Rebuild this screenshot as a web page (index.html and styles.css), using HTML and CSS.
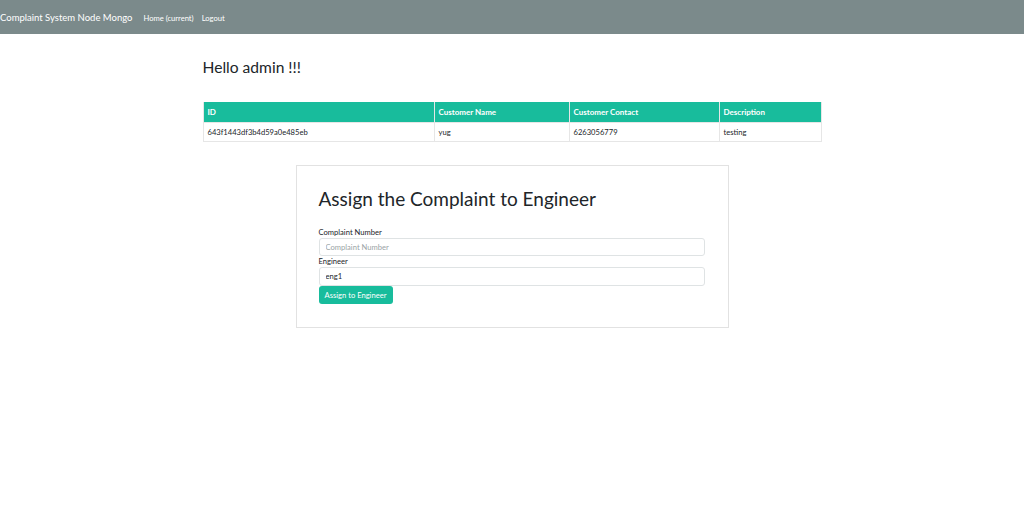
FILE: index.html
```html
<!DOCTYPE html>
<html lang="en">
<head>
<meta charset="utf-8">
<title>Complaint System Node Mongo</title>
<link rel="stylesheet" href="styles.css">
</head>
<body>
<nav class="navbar">
  <a class="brand" href="#">Complaint System Node Mongo</a>
  <ul class="nav-links">
    <li><a href="#">Home (current)</a></li>
    <li><a href="#">Logout</a></li>
  </ul>
</nav>
<main class="container">
  <h3 class="greeting">Hello admin !!!</h3>
  <table class="data-table">
    <thead>
      <tr>
        <th class="col-id">ID</th>
        <th class="col-name">Customer Name</th>
        <th class="col-contact">Customer Contact</th>
        <th class="col-desc">Description</th>
      </tr>
    </thead>
    <tbody>
      <tr>
        <td>643f1443df3b4d59a0e485eb</td>
        <td>yug</td>
        <td>6263056779</td>
        <td>testing</td>
      </tr>
    </tbody>
  </table>
  <section class="card">
    <h1 class="card-title">Assign the Complaint to Engineer</h1>
    <form class="form">
      <label class="form-label" for="cn">Complaint Number</label>
      <input class="form-input" id="cn" type="text" placeholder="Complaint Number">
      <label class="form-label" for="eng">Engineer</label>
      <input class="form-input" id="eng" type="text" value="eng1">
      <div class="form-actions">
        <button class="btn" type="button">Assign to Engineer</button>
      </div>
    </form>
  </section>
</main>
</body>
</html>
```

FILE: styles.css
```css
* { box-sizing: border-box; }
html, body {
  margin: 0;
  padding: 0;
  background: #fff;
  font-family: Lato, "Open Sans", "Liberation Sans", sans-serif;
  color: #212529;
}
.navbar {
  height: 34px;
  background: #7b8a8b;
  display: flex;
  align-items: center;
  padding-top: 1px;
}
.brand {
  color: #fff;
  text-decoration: none;
  font-size: 9.5px;
  line-height: 12px;
  margin-right: 11px;
}
.nav-links {
  list-style: none;
  margin: 0;
  padding: 0;
  display: flex;
  align-items: center;
  gap: 8px;
  font-size: 7.6px;
  line-height: 10px;
}
.nav-links a {
  color: #fff;
  text-decoration: none;
}
.container {
  width: 619px;
  margin: 0 auto;
  padding-top: 24px;
}
.greeting {
  margin: 0 0 25px;
  font-size: 15.6px;
  font-weight: 400;
  line-height: 19px;
  color: #212529;
}
.data-table {
  width: 100%;
  border-collapse: collapse;
  font-size: 7.6px;
}
.data-table th {
  background: #18bc9c;
  color: #fff;
  font-weight: 700;
  font-size: 8px;
  text-align: left;
  height: 20px;
  padding: 0 4px;
  border: 1px solid #e6e6e6;
  border-top: none;
}
.data-table td {
  height: 19px;
  padding: 0 4px;
  border: 1px solid #e6e6e6;
  color: #212529;
}
.col-id { width: 231px; }
.col-name { width: 135px; }
.col-contact { width: 150px; }
.card {
  width: 433px;
  margin: 23px auto 0;
  border: 1px solid #e2e2e2;
  padding: 21px 22px 23px;
}
.card-title {
  margin: 0 0 17px;
  font-size: 19px;
  font-weight: 400;
  line-height: 23px;
  color: #212529;
}
.form {
  display: flex;
  flex-direction: column;
}
.form-label {
  font-size: 7.6px;
  line-height: 11px;
  color: #212529;
}
.form-input {
  width: 386px;
  height: 18.5px;
  border: 1px solid #dfe3e4;
  border-radius: 3px;
  padding: 0 6px;
  font-family: inherit;
  font-size: 7.6px;
  color: #212529;
}
.form-input::placeholder { color: #9aa4a6; }
.form-actions { display: flex; }
.btn {
  background: #18bc9c;
  color: #fff;
  border: none;
  border-radius: 3px;
  width: 74px;
  height: 18px;
  padding: 0;
  font-family: inherit;
  font-size: 7.6px;
}
```
